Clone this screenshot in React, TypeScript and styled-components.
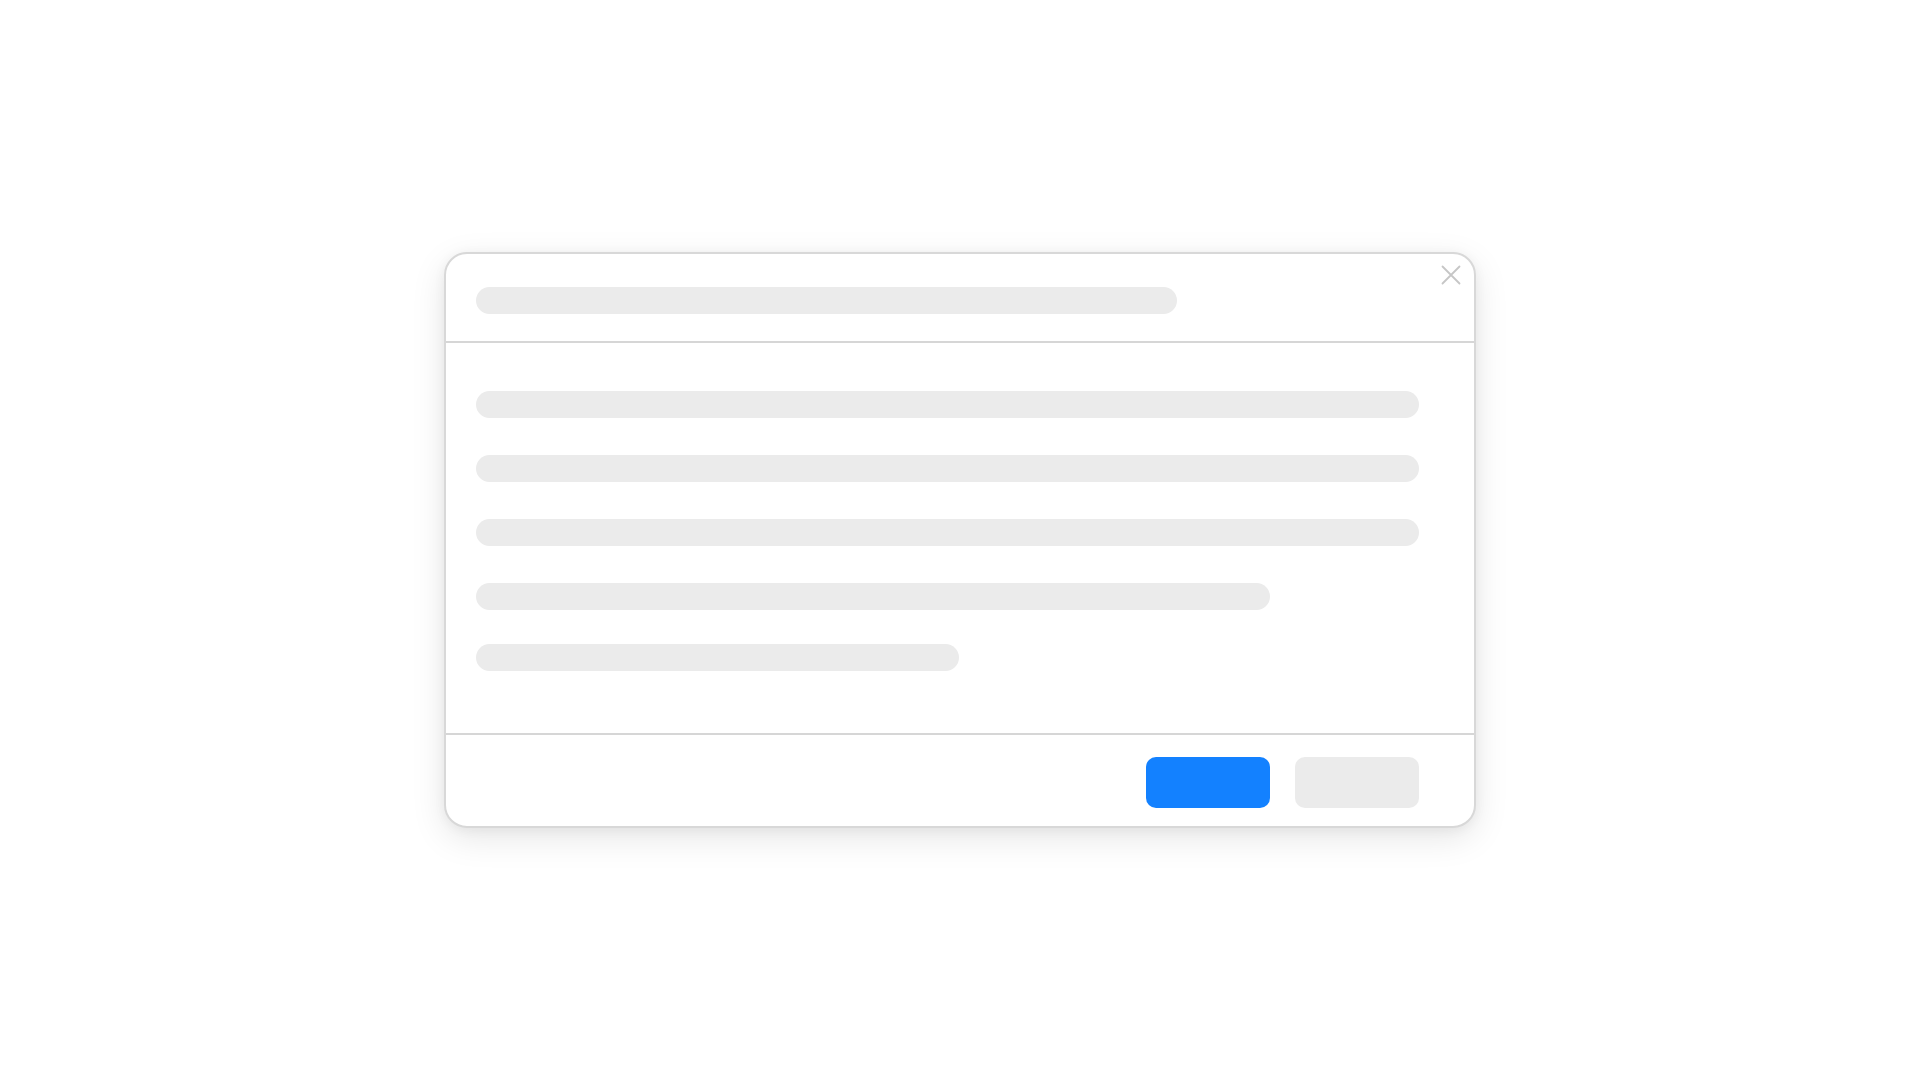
import React from "react";
import styled, { createGlobalStyle } from "styled-components";

const Global = createGlobalStyle`
  html, body { margin: 0; padding: 0; background: #ffffff; }
  body { font-family: "Liberation Sans", Arial, sans-serif; }
  * { box-sizing: border-box; }
`;

const Page = styled.div`
  width: 1920px;
  height: 1080px;
  display: flex;
  align-items: center;
  justify-content: center;
  background: #ffffff;
`;

const Dialog = styled.div`
  position: relative;
  width: 1032px;
  height: 576px;
  border: 2px solid #d8d8d8;
  border-radius: 23px;
  background: #ffffff;
  box-shadow: 0 10px 34px rgba(0, 0, 0, 0.1), 0 2px 12px rgba(0, 0, 0, 0.05);
  display: flex;
  flex-direction: column;
`;

const Header = styled.div`
  height: 89px;
  padding: 33px 0 0 30px;
  border-bottom: 2px solid #d6d6d6;
  flex-shrink: 0;
`;

const Bar = styled.div<{ $w: number; $mt?: number }>`
  width: ${(p) => p.$w}px;
  height: 27px;
  margin-top: ${(p) => p.$mt ?? 0}px;
  border-radius: 14px;
  background: #ebebeb;
`;

const CloseButton = styled.button`
  position: absolute;
  top: 11px;
  right: 13px;
  width: 20px;
  height: 20px;
  padding: 0;
  border: none;
  background: transparent;
  display: flex;
  align-items: center;
  justify-content: center;
`;

const Body = styled.div`
  flex: 1;
  padding: 48px 0 0 30px;
  display: flex;
  flex-direction: column;
`;

const Footer = styled.div`
  height: 93px;
  border-top: 2px solid #d6d6d6;
  padding: 22px 55px 0 0;
  display: flex;
  justify-content: flex-end;
  gap: 25px;
  flex-shrink: 0;
`;

const Button = styled.button<{ $primary?: boolean }>`
  width: 124px;
  height: 51px;
  border: none;
  border-radius: 10px;
  background: ${(p) => (p.$primary ? "#1381ff" : "#ebebeb")};
`;

export default function App() {
  return (
    <>
      <Global />
      <Page>
        <Dialog>
          <Header>
            <Bar $w={701} />
          </Header>
          <CloseButton aria-label="close">
            <svg width="20" height="20" viewBox="0 0 20 20">
              <path
                d="M1.5 1.5 L18.5 18.5 M18.5 1.5 L1.5 18.5"
                stroke="#c6c6c6"
                strokeWidth="1.8"
                strokeLinecap="round"
                fill="none"
              />
            </svg>
          </CloseButton>
          <Body>
            <Bar $w={943} />
            <Bar $w={943} $mt={37} />
            <Bar $w={943} $mt={37} />
            <Bar $w={794} $mt={37} />
            <Bar $w={483} $mt={34} />
          </Body>
          <Footer>
            <Button $primary />
            <Button />
          </Footer>
        </Dialog>
      </Page>
    </>
  );
}
